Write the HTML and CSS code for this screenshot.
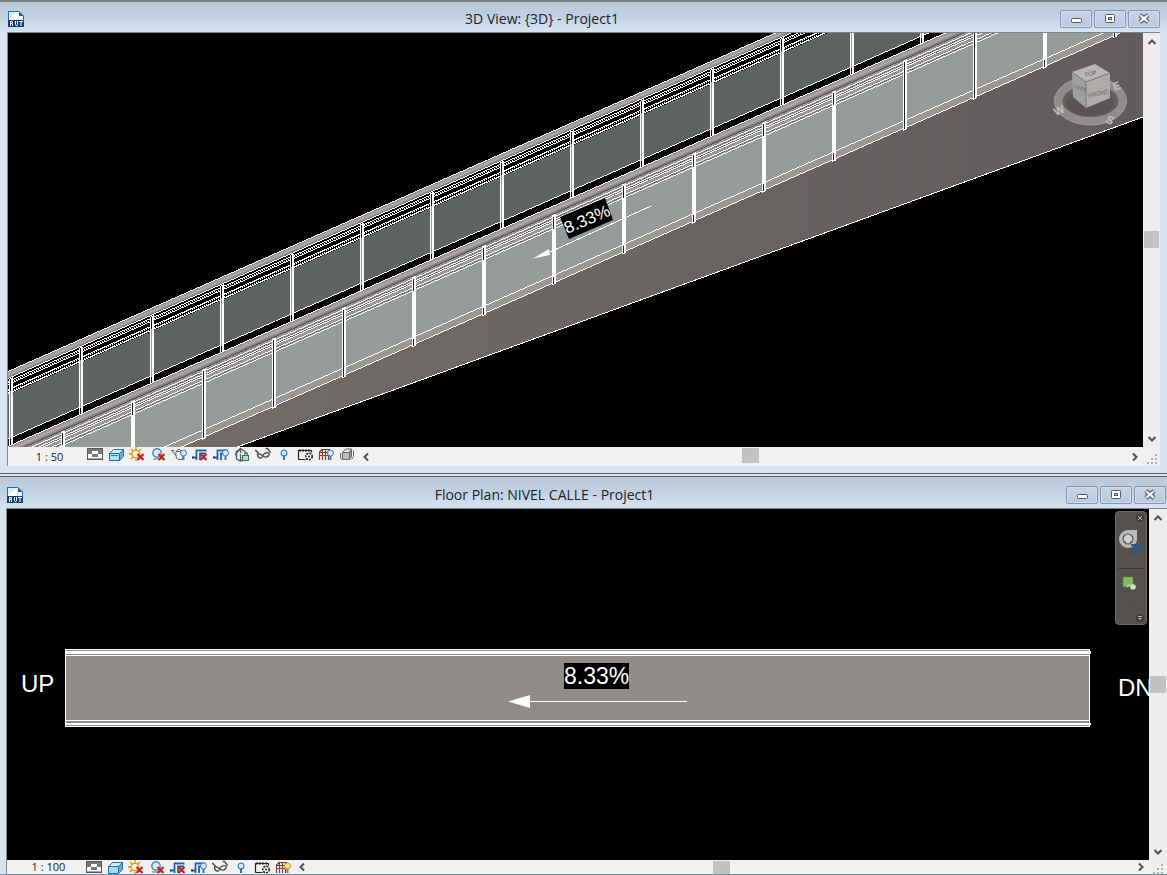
FILE: index.html
```
<!DOCTYPE html>
<html lang="en">
<head>
  <meta charset="UTF-8" />
  <meta name="viewport" content="width=device-width, initial-scale=1.0"/>
  <title>Project1</title>
  <link rel="stylesheet" href="styles.css">
</head>
<body>

  <!-- shared icons -->
  <svg class="defs" width="0" height="0" aria-hidden="true">
    <symbol id="i-rvt" viewBox="0 0 16 16">
      <path d="M0 0h11l5 5v11H0z" fill="#f4f9fd"/>
      <path d="M0 0h11v9H0z" fill="#dcecf8"/>
      <path d="M0 9L10 1v8z" fill="#fff"/>
      <path d="M11 0l5 5h-5z" fill="#1f5c9c"/>
      <path d="M0 9h16v7H0z" fill="#123f7c"/>
      <path d="M.5 0v9M0 .5h11M15.500 5v5" stroke="#2b6cab" fill="none"/>
      <path d="M2.500 15v-4.500h2v2h-2M4.500 13v2M7.500 10v3.500l1 1.500l1-1.500V10M11 10.500h4M13 10.500V15" stroke="#fff" fill="none"/>
    </symbol>
    <symbol id="i-min" viewBox="0 0 12 12">
      <rect x="1.500" y="5.500" width="10" height="4" rx="1" fill="#fff" stroke="#50566a"/>
    </symbol>
    <symbol id="i-max" viewBox="0 0 12 12">
      <rect x="1.500" y="1.500" width="9" height="8" rx="1" fill="#fff" stroke="#50566a"/>
      <rect x="4.500" y="4.500" width="3" height="2" fill="#c8d4e4" stroke="#50566a"/>
    </symbol>
    <symbol id="i-close" viewBox="0 0 12 12">
      <path d="M2 2l8 7M10 2L2 9" stroke="#50566a" stroke-width="4.400"/>
      <path d="M2.300 2.300l7.400 6.400M9.700 2.300L2.300 8.700" stroke="#fff" stroke-width="2.200"/>
    </symbol>
    <symbol id="i-up" viewBox="0 0 10 10"><path d="M1.500 7L5 3.500L8.500 7" fill="none" stroke="#505050" stroke-width="2"/></symbol>
    <symbol id="i-down" viewBox="0 0 10 10"><path d="M1.500 3L5 6.500L8.500 3" fill="none" stroke="#505050" stroke-width="2"/></symbol>
    <symbol id="i-left" viewBox="0 0 10 10"><path d="M7 1.500L3.500 5L7 8.500" fill="none" stroke="#505050" stroke-width="2"/></symbol>
    <symbol id="i-right" viewBox="0 0 10 10"><path d="M3 1.500L6.500 5L3 8.500" fill="none" stroke="#505050" stroke-width="2"/></symbol>

    <symbol id="i-redx" viewBox="0 0 16 16">
      <path d="M8.500 7l6 6M14.500 7l-6 6" stroke="#c8201c" stroke-width="2.200"/>
    </symbol>
    <symbol id="i-minibulb" viewBox="0 0 16 16">
      <circle cx="12.500" cy="6" r="3" fill="#dcecfb" stroke="#3b78c4"/>
      <path d="M12.500 9v4" stroke="#3b78c4" stroke-width="2"/>
    </symbol>
    <symbol id="i-detail" viewBox="0 0 16 16">
      <rect x=".5" y="1.500" width="15" height="11" fill="#fff" stroke="#55585c"/>
      <path d="M1 2h14v2H1zM1 4h4v3H1zM11 4h4v3h-4zM5 7h6v3H5z" fill="#74787c"/>
      <path d="M1 11.500h14" stroke="#a8aaac"/>
    </symbol>
    <symbol id="i-cube" viewBox="0 0 16 16">
      <path d="M1.500 6.500l4-4h10l-4 4z" fill="#d3eefa" stroke="#2270a8"/>
      <path d="M1.500 6.500h10v7h-10z" fill="#a4daf5" stroke="#2270a8"/>
      <path d="M11.500 6.500l4-4v7l-4 4z" fill="#5fb0de" stroke="#2270a8"/>
    </symbol>
    <symbol id="i-style" viewBox="0 0 16 16">
      <use href="#i-cube"/>
      <path d="M3 8.500h7" stroke="#3c9a58"/><path d="M3 11.500h7" stroke="#d8f6b8"/>
    </symbol>
    <symbol id="i-sun" viewBox="0 0 16 16">
      <path d="M7 0v3M7 12v2M0 7h3M2 2l2 2M12 2l-2 2M2 12l2-2" stroke="#dc9420" stroke-width="1.400"/>
      <circle cx="7" cy="7" r="3.800" fill="#fffbe0" stroke="#e09c20" stroke-width="1.400"/>
      <use href="#i-redx"/>
    </symbol>
    <symbol id="i-shadow" viewBox="0 0 16 16">
      <path d="M3 12h9" stroke="#a8b0b8" stroke-width="2"/>
      <circle cx="7" cy="6" r="4.200" fill="#d8ebfa" stroke="#4a88c0" stroke-width="1.400"/>
      <use href="#i-redx"/>
    </symbol>
    <symbol id="i-render" viewBox="0 0 16 16">
      <path d="M5 4.500h7v7l-2 1H7C5 11 4.500 8 5 4.500zM5 8.500L.5 3.500h3M6 4l2-2 2 2" fill="#eef4f8" stroke="#586068"/>
      <use href="#i-minibulb"/>
    </symbol>
    <symbol id="i-cropframe" viewBox="0 0 16 16">
      <path d="M4.500 13V3.500h10M4.500 10.500H2M8 13V6.500h6" fill="none" stroke="#1f5fa8" stroke-width="1.800"/>
      <path d="M5.500 12.500V4.500h9" fill="none" stroke="#8bbcec"/>
      <path d="M0 10.500h2" stroke="#222" stroke-width="2"/>
    </symbol>
    <symbol id="i-cropoff" viewBox="0 0 16 16"><use href="#i-cropframe"/><use href="#i-redx"/></symbol>
    <symbol id="i-cropbulb" viewBox="0 0 16 16"><use href="#i-cropframe"/><use href="#i-minibulb"/></symbol>
    <symbol id="i-home" viewBox="0 0 16 16">
      <path d="M1.500 5.500l5-4 7 5M2.500 5v7l4 2V7M6.500 13.500h3M1 8l5-6 1 4" fill="none" stroke="#555b60" stroke-width="1.300"/>
      <rect x="8.500" y="8.500" width="6" height="5" fill="#b6dcc8" stroke="#397058"/>
      <path d="M10.500 8V6.500h3V8" fill="none" stroke="#397058"/>
    </symbol>
    <symbol id="i-glasses" viewBox="0 0 16 16">
      <path d="M0 3.500h1L4 7M10.500 1.500h2l3 4" fill="none" stroke="#484c50" stroke-width="1.300"/>
      <path d="M2.500 7c2-.5 4 .5 5 2-.5 3-5 3-5-2zM7.500 8.500c2-3 4-3.500 6.500-2.500 1 3-3 6-6.500 2.500z" fill="#f8fafa" stroke="#484c50" stroke-width="1.300"/>
    </symbol>
    <symbol id="i-bulb" viewBox="0 0 16 16">
      <circle cx="8" cy="6" r="2.900" fill="#d8ecfc" stroke="#3b82cc" stroke-width="1.200"/>
      <path d="M8 9v4" stroke="#3b6fb0" stroke-width="2"/>
    </symbol>
    <symbol id="i-temp" viewBox="0 0 16 16">
      <path d="M1.500 12.500v-9h13v2M1.500 12.500h7" fill="none" stroke="#222" stroke-width="1.200"/>
      <path d="M2 3.500h12" stroke="#222" stroke-width="2" stroke-dasharray="2 1"/>
      <circle cx="12" cy="9.500" r="3.200" fill="#fff" stroke="#222" stroke-width="1.600" stroke-dasharray="2 1"/>
      <circle cx="12" cy="9.500" r="1" fill="#222"/>
    </symbol>
    <symbol id="i-grid" viewBox="0 0 16 16">
      <path d="M4 2.500h8M1 5.500h11M1 8.500h10M1.500 13V5l3-3M4.500 13V2M7.500 13V2M10.500 13V2" fill="none" stroke="#6a4548" stroke-width="1.200"/>
      <path d="M1 8.500h9M4.500 7v6" stroke="#b83430"/>
    </symbol>
    <symbol id="i-gridbulb" viewBox="0 0 16 16"><use href="#i-grid"/><use href="#i-minibulb"/></symbol>
    <symbol id="i-gridwarm" viewBox="0 0 16 16">
      <use href="#i-grid"/>
      <circle cx="12.500" cy="6" r="3" fill="#ffe07a" stroke="#d89028"/><path d="M12.500 9v4" stroke="#b07830" stroke-width="2"/>
    </symbol>
    <symbol id="i-disp" viewBox="0 0 16 16">
      <path d="M1.500 6v5l2 2M14.500 3.500v6l-2 3" fill="none" stroke="#65696c"/>
      <path d="M3.500 5.500l3-3.500h6l-2 3.500z" fill="#e4e6e7" stroke="#65696c"/>
      <path d="M3.500 5.500h7v7h-7z" fill="#b9bcbe" stroke="#65696c"/>
      <path d="M10.500 5.500l2-3v7l-2 3z" fill="#909496" stroke="#65696c"/>
    </symbol>
  </svg>

  <section class="window window-3d">
    <header class="titlebar">
      <svg class="app-icon"><use href="#i-rvt"/></svg>
      <h1>3D View: {3D} - Project1</h1>
      <div class="win-buttons">
        <button aria-label="Minimize"><svg><use href="#i-min"/></svg></button>
        <button aria-label="Maximize"><svg><use href="#i-max"/></svg></button>
        <button aria-label="Close"><svg><use href="#i-close"/></svg></button>
      </div>
    </header>

    <div class="client">
      <div class="canvas">
        <svg class="drawing" viewBox="8 33 1135 414" preserveAspectRatio="xMidYMid slice">
          <defs>
            <linearGradient id="slab" x1="0" x2="1"><stop offset="0" stop-color="#716c6a"/><stop offset="1" stop-color="#625d5c"/></linearGradient>
            <linearGradient id="rail" x1="0" y1="0" x2="0" y2="1"><stop offset="0" stop-color="#8b8786"/><stop offset=".5" stop-color="#b0acab"/><stop offset="1" stop-color="#6e6a69"/></linearGradient>
            <g id="farPost">
              <path d="M0 383v68" stroke="#fff" stroke-width="4"/>
              <path d="M-.5 384v66" stroke="#9a9c9b"/>
              <path d="M-.5 384v12M-.5 444v6" stroke="#111"/>
            </g>
            <g id="nearPost">
              <path d="M0 459v70" stroke="#fff" stroke-width="4"/>
              <path d="M-.5 461v12M-.5 521v7" stroke="#222"/>
            </g>
            <g id="nearPostDark">
              <path d="M0 459v70" stroke="#fff" stroke-width="4"/>
              <path d="M-.5 461v67" stroke="#222"/>
            </g>
          </defs>

          <rect x="8" y="33" width="1135" height="414" fill="#000"/>
          <path d="M181 447L1143 23V117L237 447z" fill="url(#slab)"/>
          <path d="M237 447L1143 117" stroke="#fff" class="crisp"/>

          <!-- the railings run at one slope, so each is drawn flat and sheared -->
          <g class="crisp" transform="matrix(1 -.441 0 1 0 0)">
            <path d="M8 398h1135v44H8z" fill="#606460"/>
            <path d="M8 375h1135v7H8z" fill="url(#rail)"/>
            <path d="M8 375h1135M8 382h1135M8 442.500h1135" stroke="#fff"/>
            <path d="M8 385h1135M8 388h1135M8 393h1135M8 397h1135" stroke="#fff"/>
            <path d="M8 386.500h1135M8 394h1135M8 396h1135" stroke="#fff" stroke-dasharray="1 1"/>
            <use href="#farPost" x="11"/><use href="#farPost" x="81"/><use href="#farPost" x="152"/>
            <use href="#farPost" x="222"/><use href="#farPost" x="292"/><use href="#farPost" x="362"/>
            <use href="#farPost" x="432"/><use href="#farPost" x="502"/><use href="#farPost" x="572"/>
            <use href="#farPost" x="642"/><use href="#farPost" x="712"/><use href="#farPost" x="782"/>
            <use href="#farPost" x="852"/><use href="#farPost" x="922"/>

            <path d="M8 458h1135v69H8z" fill="#9a9693"/>
            <path d="M8 472h1135v48H8z" fill="#959b96"/>
            <path d="M8 450h1135v8H8z" fill="url(#rail)"/>
            <path d="M8 450h1135M8 519.500h1135M8 527h1135" stroke="#fff"/>
            <path d="M8 458h1135" stroke="#555"/>
            <path d="M8 461h1135M8 464h1135M8 466h1135M8 470h1135M8 473h1135" stroke="#fff"/>
            <path d="M8 462.500h1135M8 465h1135M8 471.500h1135" stroke="#555" stroke-dasharray="1 1"/>
            <use href="#nearPost" x="63"/><use href="#nearPost" x="133"/><use href="#nearPostDark" x="204"/>
            <use href="#nearPostDark" x="274"/><use href="#nearPostDark" x="344"/><use href="#nearPost" x="414"/>
            <use href="#nearPost" x="484"/><use href="#nearPost" x="554"/><use href="#nearPost" x="624"/>
            <use href="#nearPost" x="694"/><use href="#nearPost" x="764"/><use href="#nearPost" x="834"/>
            <use href="#nearPostDark" x="905"/><use href="#nearPostDark" x="975"/><use href="#nearPost" x="1045"/>
            <use href="#nearPost" x="1115"/>
          </g>

          <!-- slope tag -->
          <path d="M651 206L550 252" stroke="#fff" class="crisp"/>
          <path d="M533 258.500L549 249l1 6z" fill="#fff"/>
          <path d="M560 217L605 198L613 220L569 239z" fill="#000"/>
          <text x="567" y="234" transform="rotate(-23 567 234)" class="tag tag-small">8.33%</text>

          <!-- view cube -->
          <ellipse cx="1090.500" cy="101" rx="32" ry="20" fill="none" stroke="#8f8d8c" stroke-width="8"/>
          <ellipse cx="1090.500" cy="101" rx="36" ry="24" fill="none" stroke="#a8a6a5" stroke-width=".8"/>
          <ellipse cx="1090" cy="103" rx="24" ry="13" fill="#504c4b" opacity=".5"/>
          <path d="M1072 72L1095 64L1110 73L1086 82z" fill="#b8b7b6"/>
          <path d="M1072 72L1086 82V108L1073 97z" fill="#a09f9e"/>
          <path d="M1086 82L1110 73V98L1086 108z" fill="#adacab"/>
          <path d="M1072 72L1086 82L1110 73M1086 82V108" fill="none" stroke="#777"/>
          <text x="1085" y="77" transform="rotate(-12 1085 77)" class="cube">TOP</text>
          <text x="1089" y="98" transform="rotate(-14 1089 98)" class="cube">FRONT</text>
          <text x="1074" y="87" transform="rotate(28 1074 87)" class="cube cube-side">LEFT</text>
          <text x="1056" y="116" transform="rotate(-25 1056 116)" class="compass">W</text>
          <text x="1105" y="122" transform="rotate(25 1105 122)" class="compass">S</text>
          <text x="1115" y="91" transform="rotate(-25 1115 91)" class="compass">E</text>
        </svg>
      </div>

      <div class="vscroll">
        <button aria-label="Scroll up"><svg><use href="#i-up"/></svg></button>
        <div class="thumb"></div>
        <button aria-label="Scroll down"><svg><use href="#i-down"/></svg></button>
      </div>

      <footer class="viewbar">
        <button class="scale">1 : 50</button>
        <div class="tools">
          <button aria-label="Detail level"><svg><use href="#i-detail"/></svg></button>
          <button aria-label="Visual style"><svg><use href="#i-style"/></svg></button>
          <button aria-label="Sun path"><svg><use href="#i-sun"/></svg></button>
          <button aria-label="Shadows"><svg><use href="#i-shadow"/></svg></button>
          <button aria-label="Rendering"><svg><use href="#i-render"/></svg></button>
          <button aria-label="Crop view"><svg><use href="#i-cropoff"/></svg></button>
          <button aria-label="Show crop region"><svg><use href="#i-cropbulb"/></svg></button>
          <button aria-label="Lock view"><svg><use href="#i-home"/></svg></button>
          <button aria-label="Temporary hide"><svg><use href="#i-glasses"/></svg></button>
          <button aria-label="Reveal hidden"><svg><use href="#i-bulb"/></svg></button>
          <button aria-label="Temporary view properties"><svg><use href="#i-temp"/></svg></button>
          <button aria-label="Analytical model"><svg><use href="#i-gridbulb"/></svg></button>
          <button aria-label="Displacement sets"><svg><use href="#i-disp"/></svg></button>
        </div>
        <div class="hscroll">
          <button aria-label="Scroll left"><svg><use href="#i-left"/></svg></button>
          <div class="thumb"></div>
          <button aria-label="Scroll right"><svg><use href="#i-right"/></svg></button>
        </div>
      </footer>
      <svg class="grip" viewBox="0 0 10 10"><path d="M8 0h2v2H8zM4 4h2v2H4zM8 4h2v2H8zM0 8h2v2H0zM4 8h2v2H4zM8 8h2v2H8z" fill="#b0b0b0"/></svg>
    </div>
  </section>

  <section class="window window-plan">
    <header class="titlebar">
      <svg class="app-icon"><use href="#i-rvt"/></svg>
      <h1>Floor Plan: NIVEL CALLE - Project1</h1>
      <div class="win-buttons">
        <button aria-label="Minimize"><svg><use href="#i-min"/></svg></button>
        <button aria-label="Maximize"><svg><use href="#i-max"/></svg></button>
        <button aria-label="Close"><svg><use href="#i-close"/></svg></button>
      </div>
    </header>

    <div class="client">
      <div class="canvas">
        <svg class="drawing" viewBox="7 509 1142 351" preserveAspectRatio="xMidYMid slice">
          <rect x="7" y="509" width="1142" height="351" fill="#000"/>
          <g class="crisp">
            <rect x="65" y="649" width="1025" height="78" fill="#8f8c89"/>
            <path d="M65 649h1025v1H65zM65 651h1026v3H65zM65 655h1025v1H65zM65 720h1025v1H65zM65 723h1026v2H65zM65 726h1025v1H65z" fill="#fff"/>
            <path d="M65.500 649v78M1089.500 649v78" stroke="#fff"/>
            <path d="M529 701.500h158" stroke="#fff"/>
            <rect x="564" y="663" width="65" height="26" fill="#000"/>
          </g>
          <path d="M508 701.500L530 695v13z" fill="#fff"/>
          <text x="564" y="684" class="tag">8.33%</text>
          <text x="21" y="692" class="tag tag-large">UP</text>
          <text x="1118" y="696" class="tag tag-large">DN</text>
        </svg>

        <nav class="navbar" aria-label="Navigation bar">
          <button aria-label="Close bar"><svg viewBox="0 0 8 8"><circle cx="4" cy="4" r="4" fill="#3f3d3c"/><path d="M2 2l4 4M6 2L2 6" stroke="#bbb"/></svg></button>
          <button class="nav-tool" aria-label="Steering wheel">
            <svg viewBox="0 0 24 30">
              <path d="M9 0h9v9a9 9 0 1 1-9-9z" fill="#b9bab9"/>
              <circle cx="9" cy="9" r="5" fill="#cfd0cf" stroke="#555" stroke-width="1.200"/>
              <path d="M5 13l2-2M13 13l-2-2" stroke="#555"/>
              <path d="M12 15h4v2l-3 4h4M18 15h2c4 0 4 6 0 6h-2z" fill="none" stroke="#285b85" stroke-width="2"/>
              <path d="M9 28h5" stroke="#69625e"/>
            </svg>
          </button>
          <button class="nav-tool nav-zoom" aria-label="Zoom">
            <svg viewBox="0 0 24 30">
              <rect x="4" y="1" width="10" height="10" fill="#86b868" stroke="#55803e" stroke-dasharray="2 1"/>
              <path d="M8 11l3-3" stroke="#ddd"/><circle cx="14" cy="11" r="2.800" fill="#d6d9d5"/>
              <path d="M9 27h4" stroke="#474443"/>
            </svg>
          </button>
          <button aria-label="Customize"><svg viewBox="0 0 8 8"><circle cx="4" cy="4" r="4" fill="#3f3d3c"/><path d="M2 2.500h4" stroke="#bbb"/><path d="M2 4h4L4 6z" fill="#bbb"/></svg></button>
        </nav>
      </div>

      <div class="vscroll">
        <button aria-label="Scroll up"><svg><use href="#i-up"/></svg></button>
        <div class="thumb"></div>
        <button aria-label="Scroll down"><svg><use href="#i-down"/></svg></button>
      </div>

      <footer class="viewbar">
        <button class="scale">1 : 100</button>
        <div class="tools">
          <button aria-label="Detail level"><svg><use href="#i-detail"/></svg></button>
          <button aria-label="Visual style"><svg><use href="#i-cube"/></svg></button>
          <button aria-label="Sun path"><svg><use href="#i-sun"/></svg></button>
          <button aria-label="Shadows"><svg><use href="#i-shadow"/></svg></button>
          <button aria-label="Crop view"><svg><use href="#i-cropoff"/></svg></button>
          <button aria-label="Show crop region"><svg><use href="#i-cropbulb"/></svg></button>
          <button aria-label="Temporary hide"><svg><use href="#i-glasses"/></svg></button>
          <button aria-label="Reveal hidden"><svg><use href="#i-bulb"/></svg></button>
          <button aria-label="Temporary view properties"><svg><use href="#i-temp"/></svg></button>
          <button aria-label="Analytical model"><svg><use href="#i-gridwarm"/></svg></button>
        </div>
        <div class="hscroll">
          <button aria-label="Scroll left"><svg><use href="#i-left"/></svg></button>
          <div class="thumb"></div>
          <button aria-label="Scroll right"><svg><use href="#i-right"/></svg></button>
        </div>
      </footer>
      <svg class="grip" viewBox="0 0 10 10"><path d="M8 0h2v2H8zM4 4h2v2H4zM8 4h2v2H8zM0 8h2v2H0zM4 8h2v2H4zM8 8h2v2H8z" fill="#b0b0b0"/></svg>
    </div>
  </section>

</body>
</html>
```
FILE: styles.css
```
* {
  box-sizing: border-box;
}

body {
  margin: 0;
  height: 100vh;
  display: flex;
  flex-direction: column;
  overflow: hidden;
  font-family: "Open Sans", "Noto Sans", sans-serif;
  background: #d8e4f2;
  color: #222;
}

button {
  display: flex;
  align-items: center;
  justify-content: center;
  padding: 0;
  border: none;
  background: none;
  font-family: inherit;
  cursor: pointer;
}

.defs {
  position: absolute;
}

/* windows */
.window {
  display: flex;
  flex-direction: column;
  min-height: 0;
  background: #d8e4f2;
}

.window-3d {
  flex: 464 1 0;
  border-top: 2px solid #7d7f7c;
  padding: 0 7px 7px 7px;
}

.window-plan {
  flex: 397 1 0;
  border-top: 4px double #5f625f;
  border-bottom: 1px solid #6f8db5;
  padding-left: 6px;
}

.titlebar {
  display: flex;
  align-items: center;
  height: 30px;
  margin: 0 -7px;
  padding: 4px 7px 0 8px;
  background: linear-gradient(#b8c8d9, #c3d2e3 50%, #d7e3f0);
}

.window-plan .titlebar {
  height: 31px;
  margin: 0 0 0 -6px;
  padding: 4px 1px 0 7px;
}

.app-icon {
  width: 16px;
  height: 16px;
}

h1 {
  flex: 1;
  margin: 0;
  font-size: 14px;
  line-height: 20px;
  font-weight: normal;
  text-align: center;
}

.win-buttons {
  display: flex;
  gap: 2px;
}

.win-buttons button {
  width: 32px;
  height: 18px;
  border: 1px solid #8593b4;
  border-radius: 2px;
  background: linear-gradient(#c8d5e5, #bac9dd);
  box-shadow: inset 0 0 0 1px #d3deec;
}

.win-buttons svg {
  width: 12px;
  height: 12px;
}

.client {
  flex: 1;
  min-height: 0;
  display: grid;
  grid-template-columns: minmax(0, 1fr) 17px;
  grid-template-rows: minmax(0, 1fr) 19px;
  border-top: 1px solid #7f8488;
  border-left: 1px solid #85898c;
  background: #f0f0f0;
}

.window-plan .client {
  grid-template-columns: minmax(0, 1fr) 18px;
  grid-template-rows: minmax(0, 1fr) 14px;
}

.canvas {
  position: relative;
  min-height: 0;
  background: #000;
}

.drawing {
  display: block;
  width: 100%;
  height: 100%;
}

.crisp {
  shape-rendering: crispEdges;
}

.tag {
  font-family: "Liberation Sans", sans-serif;
  font-size: 23px;
  fill: #fff;
}

.tag-small {
  font-size: 17px;
}

.tag-large {
  font-size: 24px;
}

.cube {
  font-family: "Liberation Sans", sans-serif;
  font-size: 6px;
  fill: #5f5e5d;
}

.cube-side {
  font-size: 5px;
}

.compass {
  font-family: "Liberation Sans", sans-serif;
  font-size: 11px;
  font-weight: bold;
  fill: #c2c0bf;
}

/* scroll bars */
.vscroll {
  display: grid;
  grid-template-rows: 17px 181fr 17px 182fr 17px;
  background: #efeeef;
}

.window-plan .vscroll {
  grid-template-rows: 17px 150fr 17px 151fr 17px;
}

.vscroll .thumb {
  grid-row: 3;
  margin: 0 1px;
}

.vscroll button:last-child {
  grid-row: 5;
}

.hscroll {
  flex: 1;
  display: grid;
  grid-template-columns: 17px 367fr 17px 367fr 17px;
}

.window-plan .hscroll {
  grid-template-columns: 17px 402fr 17px 402fr 17px;
}

.hscroll .thumb {
  grid-column: 3;
  margin: 1px 0 3px;
}

.window-plan .hscroll .thumb {
  margin: 1px 0 0;
}

.hscroll button:last-child {
  grid-column: 5;
}

.thumb {
  background: #c3c1c3;
}

.vscroll svg,
.hscroll svg {
  width: 10px;
  height: 10px;
}

/* view control bar */
.viewbar {
  display: flex;
  align-items: stretch;
  min-width: 0;
  background: #f1f1f1;
}

.scale {
  width: 79px;
  padding-left: 4px;
  font-size: 11px;
  line-height: 16px;
  color: #222;
}

.tools {
  display: flex;
  gap: 5px;
  padding-right: 2px;
}

.tools svg {
  width: 16px;
  height: 16px;
}

.tools button {
  height: 16px;
}

.grip {
  width: 10px;
  height: 10px;
  align-self: end;
  justify-self: center;
  margin-bottom: 2px;
}

.window-plan .grip {
  margin-bottom: 0;
}

/* floating navigation bar */
.navbar {
  position: absolute;
  top: 2px;
  right: 2px;
  display: flex;
  flex-direction: column;
  width: 32px;
  height: 114px;
  padding: 2px;
  border: 1px solid #6d6967;
  border-radius: 4px;
  background: #55514f;
}

.navbar button {
  align-self: flex-end;
}

.navbar button svg {
  width: 8px;
  height: 8px;
}

.navbar .nav-tool {
  align-self: stretch;
  flex: 1;
}

.navbar .nav-tool svg {
  width: 24px;
  height: 30px;
}

.navbar .nav-zoom {
  border-top: 1px solid #3b3837;
}
```
